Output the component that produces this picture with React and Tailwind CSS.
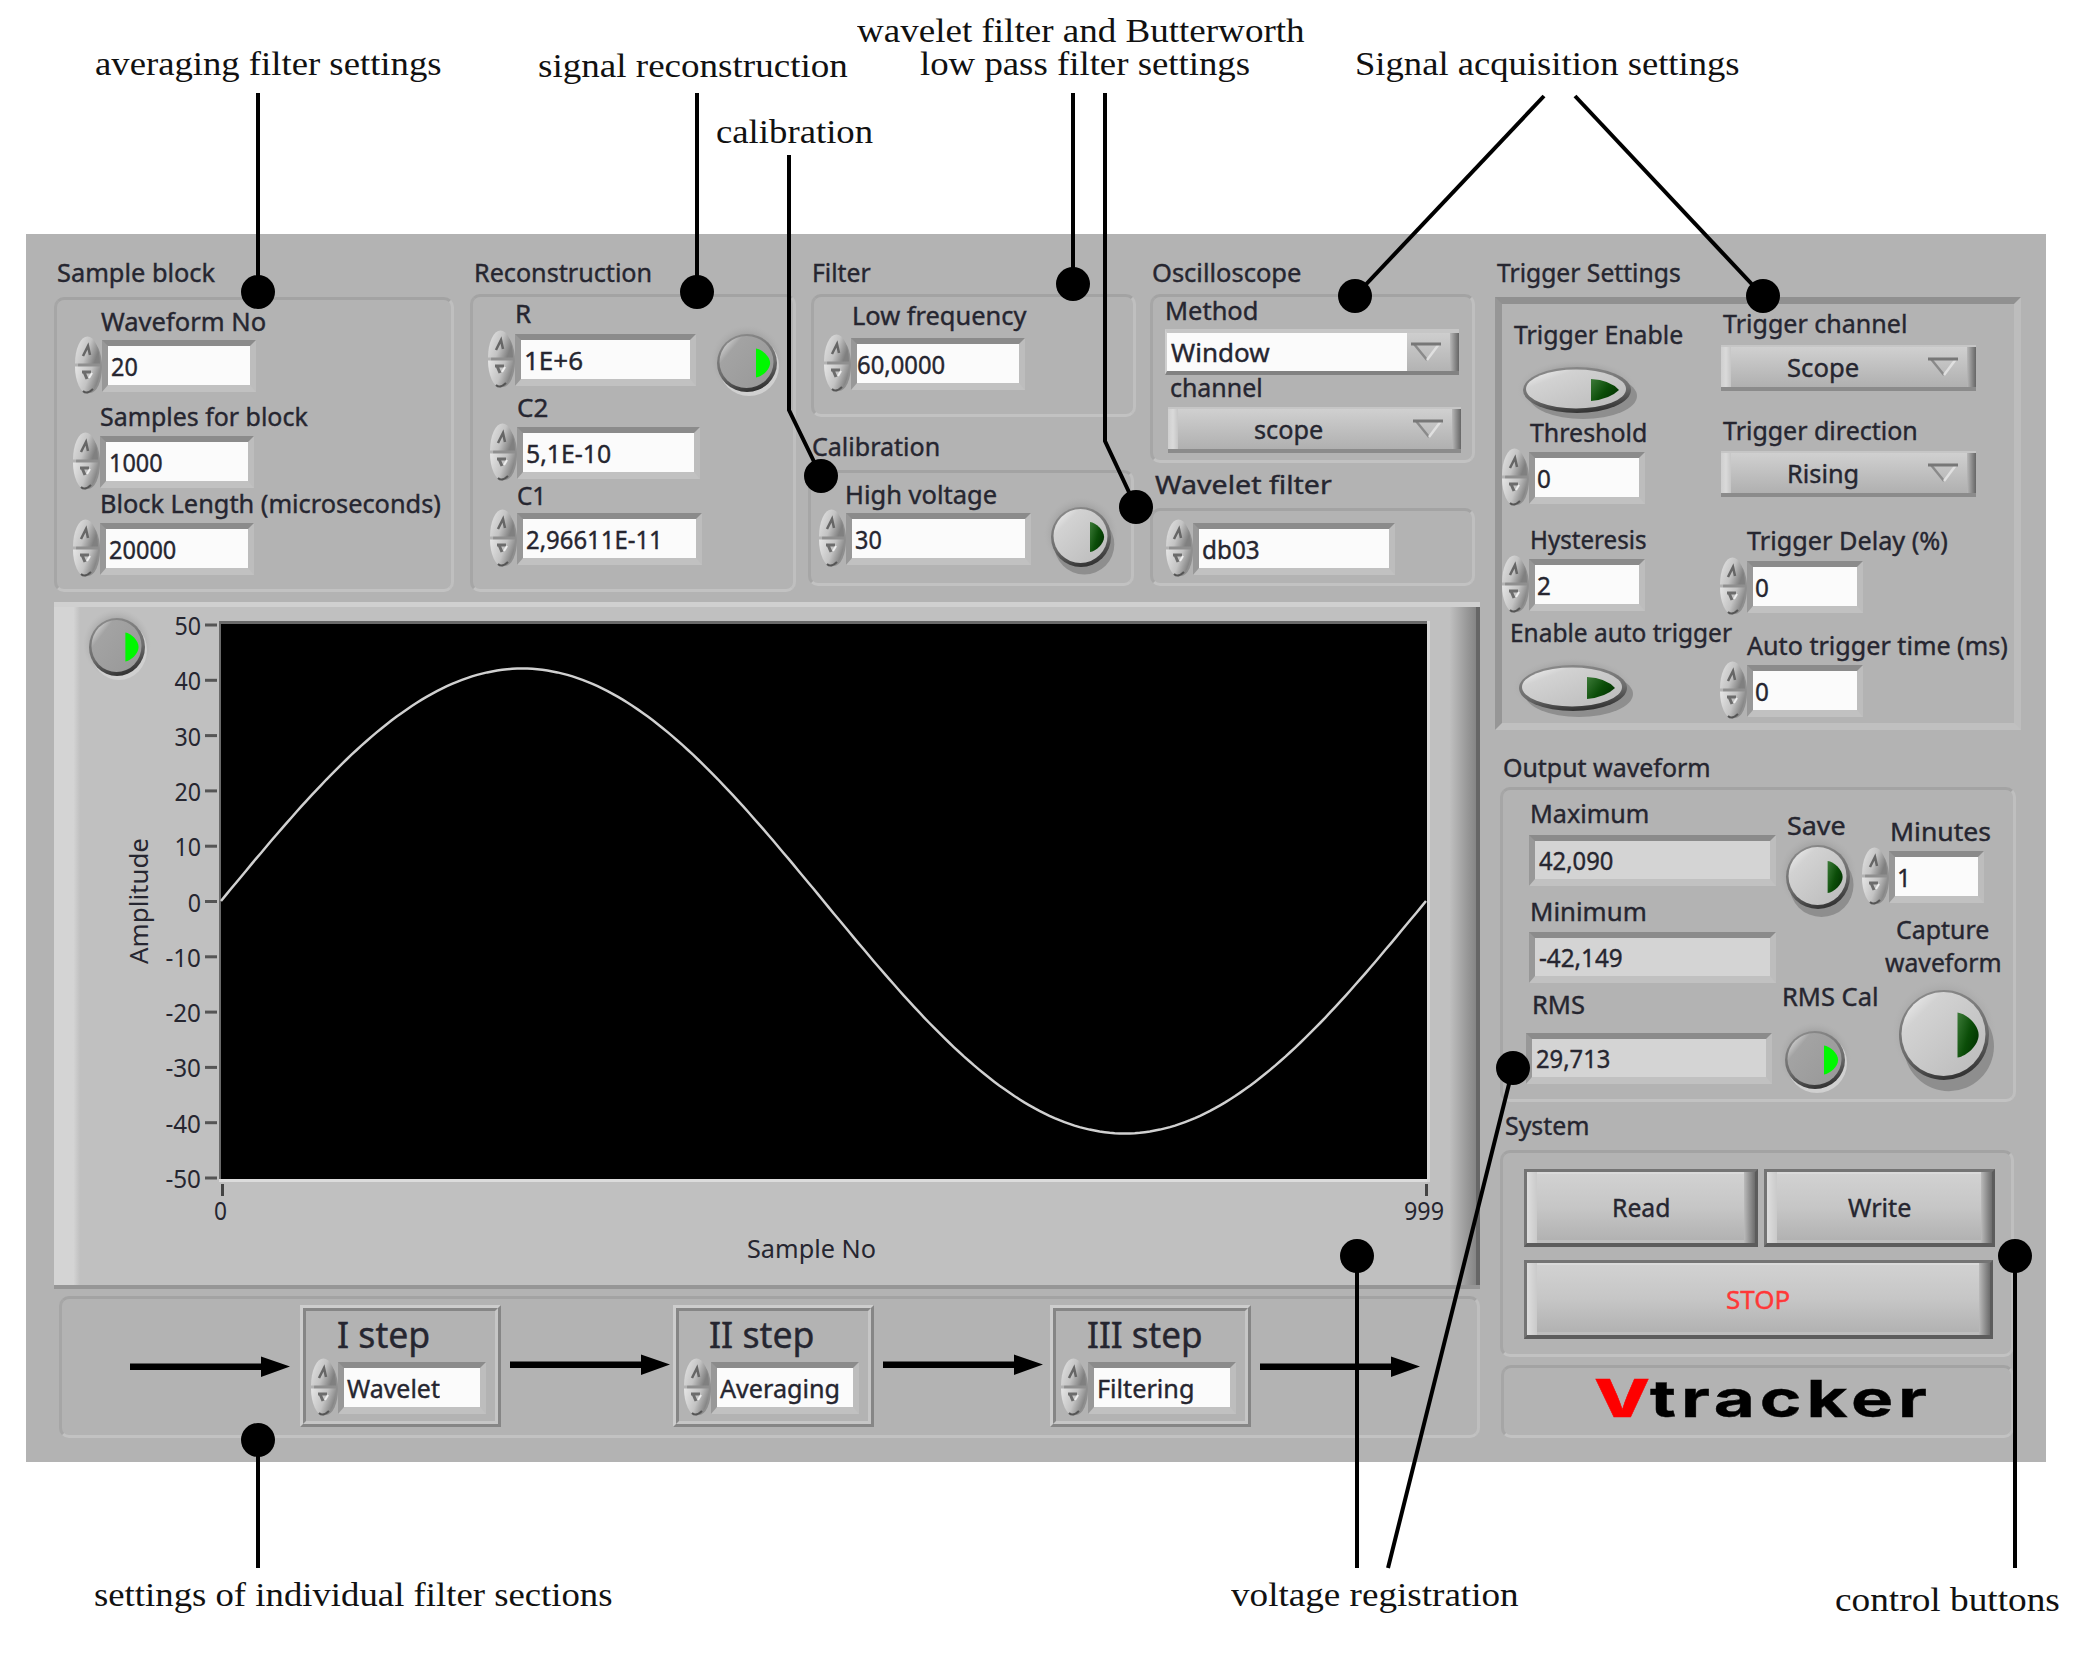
import { useLayoutEffect, useRef, useState } from 'react';

const FRAME = 'border-[3px] rounded-[10px] border-t-[#a3a3a3] border-l-[#a6a6a6] border-r-[#bfbfbf] border-b-[#c2c2c2]';
const SUNKEN = 'border-t-[6px] border-l-[6px] border-r-[6px] border-b-[7px] border-t-[#8b8b8b] border-l-[#989898] border-r-[#bdbdbd] border-b-[#c1c1c1]';

// Stretches one line of text to a given width
function FitText({ w, className = '', children }) {
  const ref = useRef(null);
  const [scale, setScale] = useState(1);

  useLayoutEffect(() => {
    setScale(w / ref.current.offsetWidth);
  }, [w, children]);

  return (
    <div className={`shrink-0 ${className}`} style={{ width: w }}>
      <span ref={ref} className="inline-block origin-left whitespace-nowrap align-top" style={{ transform: `scaleX(${scale})` }}>
        {children}
      </span>
    </div>
  );
}

function Label({ w, className = '', children }) {
  return <FitText w={w} className={`h-[30px] text-[26px] leading-[30px] ${className}`}>{children}</FitText>;
}

function Note({ w, className = '', children }) {
  return (
    <FitText w={w} className={`h-[34px] font-['Liberation_Serif',serif] text-[33px] leading-[33px] text-[#111] [-webkit-text-stroke:0] ${className}`}>
      {children}
    </FitText>
  );
}

function Defs() {
  return (
    <svg className="absolute h-0 w-0">
      <defs>
        <linearGradient id="face" x1="0" y1="0" x2="1" y2="1">
          <stop offset="0" stopColor="#f6f6f6" />
          <stop offset="0.25" stopColor="#d2d2d2" />
          <stop offset="1" stopColor="#bababa" />
        </linearGradient>
        <linearGradient id="facePressed" x1="0" y1="0.1" x2="1" y2="0.9">
          <stop offset="0.05" stopColor="#d6d6d6" />
          <stop offset="0.22" stopColor="#a3a3a3" />
          <stop offset="1" stopColor="#989898" />
        </linearGradient>
        <linearGradient id="rim" x1="0.3" y1="0" x2="0.6" y2="1">
          <stop offset="0" stopColor="#8a8a8a" />
          <stop offset="0.6" stopColor="#6d6d6d" />
          <stop offset="1" stopColor="#303030" />
        </linearGradient>
        <linearGradient id="off" x1="0" y1="0" x2="1" y2="0.6">
          <stop offset="0" stopColor="#3c7a38" />
          <stop offset="0.6" stopColor="#0b4d08" />
          <stop offset="1" stopColor="#033602" />
        </linearGradient>
        <linearGradient id="knob" x1="0" y1="0" x2="1" y2="0.4">
          <stop offset="0" stopColor="#e6e6e6" />
          <stop offset="0.6" stopColor="#c3c3c3" />
          <stop offset="1" stopColor="#808080" />
        </linearGradient>
        <radialGradient id="halo">
          <stop offset="0.75" stopColor="#8c8c8c" stopOpacity="0.8" />
          <stop offset="1" stopColor="#a8a8a8" stopOpacity="0" />
        </radialGradient>
      </defs>
    </svg>
  );
}

function RoundButton({ size, rx, ry, on, className = '' }) {
  const c = size / 2;
  const lx = c + rx * 0.3;
  const tip = lx + rx * 0.47;
  const lh = ry * 0.5;
  return (
    <svg width={size} height={size} className={`shrink-0 overflow-visible ${className}`}>
      {on ? (
        <>
          <ellipse cx={c} cy={c - 3} rx={rx + 6} ry={ry + 6} fill="url(#halo)" opacity="0.45" />
          <ellipse cx={c + 2} cy={c + 3} rx={rx} ry={ry + 1} fill="#d0d0d0" />
        </>
      ) : (
        <>
          <ellipse cx={c} cy={c - 3} rx={rx + 7} ry={ry + 7} fill="url(#halo)" opacity="0.45" />
          <ellipse cx={c + rx * 0.11} cy={c + ry * 0.25} rx={rx} ry={ry} fill="#8e8e8e" />
        </>
      )}
      <ellipse cx={c} cy={c} rx={rx} ry={ry} fill="url(#rim)" />
      <ellipse cx={c - 0.5} cy={c - 1} rx={rx - 3} ry={ry - 3} fill={on ? 'url(#facePressed)' : 'url(#face)'} />
      <path
        d={`M${lx} ${c - lh} C${lx + rx * 0.2} ${c - lh * 0.95} ${tip} ${c - lh * 0.45} ${tip} ${c} C${tip} ${c + lh * 0.45} ${lx + rx * 0.2} ${c + lh * 0.95} ${lx} ${c + lh} Z`}
        fill={on ? '#00f800' : 'url(#off)'}
      />
    </svg>
  );
}

function OvalButton({ className = '' }) {
  return (
    <svg width="130" height="66" className={`shrink-0 overflow-visible ${className}`}>
      <ellipse cx="65" cy="32" rx="60" ry="29" fill="url(#halo)" opacity="0.5" />
      <ellipse cx="71" cy="39" rx="54" ry="23" fill="#8e8e8e" />
      <ellipse cx="65" cy="33" rx="54" ry="23" fill="url(#rim)" />
      <ellipse cx="64" cy="32" rx="50" ry="19.5" fill="url(#face)" />
      <path d="M79 22 Q98 23 107 33 Q98 42 79 44 Z" fill="url(#off)" />
    </svg>
  );
}

function Spinner() {
  return (
    <svg width="25" height="56" className="shrink-0 overflow-visible">
      <ellipse cx="15" cy="30" rx="12" ry="26" fill="#8f8f8f" />
      <path d="M0 26.500 A12.500 27 0 0 1 25 26.500 Z" fill="url(#knob)" />
      <path d="M0 29.500 A12.500 27 0 0 0 25 29.500 Z" fill="url(#knob)" />
      <path d="M8 19 L13 9 L15 18" fill="none" stroke="#666" strokeWidth="2.500" />
      <path d="M7 35 H16 M9 35 L12 42" fill="none" stroke="#6c6c6c" strokeWidth="3" />
      <path d="M14 41 L17 36" fill="none" stroke="#eee" strokeWidth="2" />
      <path d="M8 54 Q12 58 18 52" fill="none" stroke="#555" strokeWidth="2" />
    </svg>
  );
}

// tw is the width of the value text, boxClass the width of the white part
function NumField({ value, tw, boxClass, pad = 'ml-[3px]', className = '' }) {
  return (
    <div className={`flex h-14 shrink-0 ${className}`}>
      <Spinner />
      <div className={`ml-0.5 mt-[3px] box-content h-[39px] shrink-0 ${SUNKEN} bg-[#fbfbfb] ${boxClass}`}>
        <FitText w={tw} className={`h-[39px] text-[26px] leading-[41px] ${pad}`}>{value}</FitText>
      </div>
    </div>
  );
}

function Indicator({ value, tw, className = '' }) {
  return (
    <div className={`h-[51px] shrink-0 bg-[#d4d4d4] pl-1 ${SUNKEN} ${className}`}>
      <FitText w={tw} className="h-[38px] text-[26px] leading-[38px]">{value}</FitText>
    </div>
  );
}

function Triangle() {
  return (
    <svg width="30" height="20" className="shrink-0">
      <path d="M3 2 L16 18" stroke="#8a8a8a" strokeWidth="2.500" />
      <path d="M28 2 L16 18" stroke="#e0e0e0" strokeWidth="2.500" />
      <path d="M0 2 H30" stroke="#777" strokeWidth="3" />
    </svg>
  );
}

function Ring({ value, tw, textClass, className = '' }) {
  return (
    <div className={`flex h-[46px] shrink-0 border-b-[4px] border-b-[#8b8b8b] border-t-2 border-t-[#c6c6c6] bg-linear-to-b from-[#d0d0d0] to-[#b0b0b0] ${className}`}>
      <div className="w-[10px] bg-linear-to-r from-[#cfcfcf] via-[#dadada] to-[#c6c6c6]" />
      <div className="flex flex-1 items-center justify-between pr-[9px]">
        <FitText w={tw} className={`h-[40px] text-[26px] leading-[41px] ${textClass}`}>{value}</FitText>
        <Triangle />
      </div>
      <div className="w-[9px] bg-linear-to-r from-[#b8b8b8] to-[#666]" />
    </div>
  );
}

function PushButton({ text, tw, className = '' }) {
  return (
    <div className={`flex shrink-0 border-[3px] border-b-[4px] border-[#747474] border-b-[#5c5c5c] border-r-[#5c5c5c] bg-linear-to-b from-[#d2d2d2] via-[#c6c6c6] to-[#b0b0b0] ${className}`}>
      <div className="w-[10px] bg-linear-to-r from-[#dedede] to-[#cacaca]" />
      <div className="flex flex-1 items-center justify-center border-b-[3px] border-t-2 border-b-[#bdbdbd] border-t-[#dadada]">
        <FitText w={tw} className="h-[34px] text-[26px] leading-[35px]">{text}</FitText>
      </div>
      <div className="w-[11px] bg-linear-to-r from-[#bbb] to-[#6c6c6c]" />
    </div>
  );
}

const yTicks = [50, 40, 30, 20, 10, 0, -10, -20, -30, -40, -50];

function Graph() {
  const points = [];
  for (let i = 0; i <= 240; i++) {
    const x = 167 + (i / 240) * 1205;
    const y = 299 - 232.5 * Math.sin((i / 240) * 2 * Math.PI);
    points.push(`${x.toFixed(1)},${y.toFixed(1)}`);
  }
  return (
    <div className="flex h-[687px] w-[1426px] shrink-0 border-b-[4px] border-t-[5px] border-b-[#969696] border-t-[#d0d0d0] bg-[#c0c0c0]">
      <div className="w-[26px] bg-linear-to-r from-[#d4d4d4] from-75% to-[#c0c0c0]" />
      <svg width="1370" height="678" viewBox="26 5 1370 678" className="shrink-0 overflow-visible">
        <g transform="translate(28 10)">
          <RoundButton size={70} rx={28} ry={29} on />
        </g>
        <rect x="165" y="19" width="1209" height="561" fill="#6a6a6a" />
        <rect x="165" y="577" width="1209" height="3" fill="#dcdcdc" />
        <rect x="1373" y="19" width="3" height="561" fill="#d6d6d6" />
        <rect x="167" y="22" width="1206" height="555" fill="#000" />
        <polyline points={points.join(' ')} fill="none" stroke="#d0d0d0" strokeWidth="2.500" />
        {yTicks.map((t, i) => {
          const y = 23 + i * 55.3;
          const w = String(Math.abs(t)).length * 13.3 + (t < 0 ? 9 : 0);
          return (
            <g key={t}>
              <rect x="151" y={y - 1.5} width="12" height="3" fill="#555" />
              <text x={147 - w} y={y + 10} fontSize="26" textLength={w} lengthAdjust="spacingAndGlyphs" fill="#262630">{t}</text>
            </g>
          );
        })}
        <rect x="167" y="582" width="3" height="12" fill="#444" />
        <rect x="1371" y="582" width="3" height="12" fill="#444" />
        <text x="160" y="618" fontSize="26" textLength="13" lengthAdjust="spacingAndGlyphs" fill="#262630">0</text>
        <text x="1350" y="618" fontSize="26" textLength="40" lengthAdjust="spacingAndGlyphs" fill="#262630">999</text>
        <text x="693" y="656" fontSize="26" textLength="129" lengthAdjust="spacingAndGlyphs" fill="#262630">Sample No</text>
        <text transform="translate(94 362) rotate(-90)" fontSize="26" textLength="126" lengthAdjust="spacingAndGlyphs" fill="#262630">Amplitude</text>
      </svg>
      <div className="w-[26px] bg-linear-to-r from-[#bfbfbf] to-[#858585]" />
      <div className="w-[4px] bg-[#666]" />
    </div>
  );
}

function Arrow({ className = '' }) {
  return (
    <svg width="160" height="22" className={`shrink-0 ${className}`}>
      <path d="M0 7.500 H131 V0.500 L160 10.500 L131 21 V14 H0 Z" fill="#000" />
    </svg>
  );
}

function Step({ title, titleW, titleClass, value, tw, boxClass, className }) {
  return (
    <div className={`h-[122px] w-[201px] shrink-0 border-[3px] border-b-[#868686] border-l-[#cdcdcd] border-r-[#868686] border-t-[#cdcdcd] ${className}`}>
      <div className="h-full border-[3px] border-b-[#c6c6c6] border-l-[#868686] border-r-[#c6c6c6] border-t-[#868686]">
        <FitText w={titleW} className={`h-[46px] text-[36px] leading-[48px] ${titleClass}`}>{title}</FitText>
        <NumField value={value} tw={tw} boxClass={boxClass} className="ml-[5px] mt-[2px]" />
      </div>
    </div>
  );
}

function LeftPanel() {
  return (
    <div className="flex w-[1426px] shrink-0 flex-col">
      <div className="flex h-[345px] shrink-0">
        {/* Sample block */}
        <div className="w-[416px] shrink-0">
          <Label w={158} className="ml-[3px]">Sample block</Label>
          <div className={`mt-[10px] flex h-[295px] w-[400px] flex-col ${FRAME}`}>
            <Label w={165} className="ml-[44px] mt-[6px]">Waveform No</Label>
            <NumField value="20" tw={27} boxClass="w-[142px]" className="ml-[18px] mt-px" />
            <Label w={208} className="ml-[43px] mt-2">Samples for block</Label>
            <NumField value="1000" tw={54} boxClass="w-[142px]" className="-mb-px ml-[16px] mt-[2px]" />
            <Label w={341} className="ml-[43px]">Block Length (microseconds)</Label>
            <NumField value="20000" tw={67} boxClass="w-[142px]" className="ml-[16px] mt-[2px]" />
          </div>
        </div>

        {/* Reconstruction */}
        <div className="w-[338px] shrink-0">
          <Label w={178} className="ml-[4px]">Reconstruction</Label>
          <div className={`mt-[7px] flex h-[298px] w-[326px] ${FRAME}`}>
            <div className="flex w-[239px] shrink-0 flex-col">
              <Label w={16} className="ml-[42px] mt-px">R</Label>
              <NumField value="1E+6" tw={59} boxClass="w-[169px]" className="ml-[15px] mt-[3px]" />
              <Label w={31} className="ml-[44px] mt-[5px]">C2</Label>
              <NumField value="5,1E-10" tw={85} boxClass="w-[171px]" className="ml-[17px] mt-[2px]" />
              <Label w={29} className="ml-[44px]">C1</Label>
              <NumField value="2,96611E-11" tw={137} boxClass="w-[173px]" className="ml-[17px]" />
            </div>
            <RoundButton size={70} rx={30} ry={29} on className="mt-[31px]" />
          </div>
        </div>

        {/* Filter + calibration */}
        <div className="w-[342px] shrink-0">
          <Label w={59} className="ml-[4px]">Filter</Label>
          <div className={`ml-[3px] mt-[7px] flex h-[123px] w-[325px] flex-col ${FRAME}`}>
            <Label w={174} className="ml-[38px] mt-[3px]">Low frequency</Label>
            <NumField value="60,0000" tw={88} boxClass="w-[162px]" pad="ml-0" className="ml-[10px] mt-[5px]" />
          </div>
          <Label w={128} className="ml-[4px] mt-[14px]">Calibration</Label>
          <div className={`mt-[9px] flex h-[116px] w-[326px] ${FRAME}`}>
            <div className="flex w-[230px] shrink-0 flex-col">
              <Label w={152} className="ml-[34px] mt-[6px]">High voltage</Label>
              <NumField value="30" tw={27} boxClass="w-[173px]" className="ml-[8px] mt-px" />
            </div>
            <RoundButton size={80} rx={30} ry={30} className="mt-[24px]" />
          </div>
        </div>

        {/* Oscilloscope + wavelet */}
        <div className="w-[325px] shrink-0">
          <Label w={149} className="ml-[2px]">Oscilloscope</Label>
          <div className={`mt-[7px] flex h-[169px] w-[325px] flex-col ${FRAME}`}>
            <Label w={93} className="-mt-[2px] ml-[12px]">Method</Label>
            <div className="ml-[12px] mt-[4px] flex h-[46px] w-[294px] shrink-0 items-center border-b-[4px] border-l-[2px] border-t-[4px] border-b-[#828282] border-l-[#cfcfcf] border-t-[#c6c6c6] bg-linear-to-b from-[#cecece] to-[#b3b3b3]">
              <div className="mr-[4px] h-[38px] w-[240px] bg-[#fbfbfb] pl-[4px]">
                <FitText w={99} className="h-[38px] text-[26px] leading-[38px]">Window</FitText>
              </div>
              <Triangle />
              <div className="ml-auto h-full w-[9px] bg-linear-to-r from-[#b8b8b8] to-[#666]" />
            </div>
            <Label w={93} className="-mt-[3px] ml-[17px]">channel</Label>
            <Ring value="scope" tw={69} textClass="ml-[76px]" className="ml-[15px] mt-[5px] w-[293px]" />
          </div>
          <Label w={177} className="ml-[5px] mt-[6px]">Wavelet filter</Label>
          <div className={`mt-[9px] flex h-[78px] w-[325px] flex-col ${FRAME}`}>
            <NumField value="db03" tw={58} boxClass="w-[190px]" className="ml-[13px] mt-[9px]" />
          </div>
        </div>
      </div>

      <Graph />

      {/* Processing order */}
      <div className={`ml-[5px] mt-[7px] flex h-[142px] w-[1421px] ${FRAME}`}>
        <Arrow className="ml-[68px] mt-[57px]" />
        <Step title="I step" titleW={93} titleClass="ml-[31px]" value="Wavelet" tw={93} boxClass="w-[136px]" className="ml-[10px] mt-[6px]" />
        <Arrow className="ml-[9px] mt-[55px]" />
        <Step title="II step" titleW={105} titleClass="ml-[30px]" value="Averaging" tw={120} boxClass="w-[136px]" className="ml-[3px] mt-[6px]" />
        <Arrow className="ml-[9px] mt-[55px]" />
        <Step title="III step" titleW={116} titleClass="ml-[31px]" value="Filtering" tw={97} boxClass="w-[136px]" className="ml-[7px] mt-[6px]" />
        <Arrow className="ml-[9px] mt-[57px]" />
      </div>
    </div>
  );
}

function RightPanel() {
  return (
    <div className="ml-[15px] flex w-[531px] shrink-0 flex-col">
      {/* Trigger settings */}
      <Label w={184} className="ml-[2px]">Trigger Settings</Label>
      <div className="mt-[10px] flex h-[433px] w-[526px] shrink-0 border-[7px] border-b-[#c0c0c0] border-l-[#969696] border-r-[#bdbdbd] border-t-[#909090]">
        <div className="flex w-[214px] shrink-0 flex-col">
          <Label w={169} className="ml-[12px] mt-[15px]">Trigger Enable</Label>
          <OvalButton className="ml-[10px] mt-2" />
          <Label w={117} className="-mt-[6px] ml-[28px]">Threshold</Label>
          <NumField value="0" tw={14} boxClass="w-[104px]" pad="ml-[2px]" className="mt-[2px]" />
          <Label w={117} className="ml-[28px] mt-[19px]">Hysteresis</Label>
          <NumField value="2" tw={14} boxClass="w-[104px]" pad="ml-[2px]" className="mt-[2px]" />
          <Label w={222} className="ml-[8px] mt-[5px]">Enable auto trigger</Label>
          <OvalButton className="ml-[6px] mt-[8px]" />
        </div>
        <div className="flex shrink-0 flex-col">
          <Label w={184} className="ml-[7px] mt-[4px]">Trigger channel</Label>
          <Ring value="Scope" tw={72} textClass="ml-[56px]" className="ml-[5px] mt-[7px] w-[255px]" />
          <Label w={195} className="ml-[7px] mt-[24px]">Trigger direction</Label>
          <Ring value="Rising" tw={72} textClass="ml-[56px]" className="ml-[5px] mt-[6px] w-[255px]" />
          <Label w={201} className="ml-[31px] mt-[28px]">Trigger Delay (%)</Label>
          <NumField value="0" tw={14} boxClass="w-[104px]" pad="ml-[2px]" className="ml-[4px] mt-[3px]" />
          <Label w={261} className="ml-[31px] mt-[16px]">Auto trigger time (ms)</Label>
          <NumField value="0" tw={14} boxClass="w-[104px]" pad="ml-[2px]" className="ml-[4px] mt-[2px]" />
        </div>
      </div>

      {/* Output waveform */}
      <Label w={208} className="ml-[8px] mt-[22px]">Output waveform</Label>
      <div className={`ml-[5px] mt-[5px] flex h-[315px] w-[516px] shrink-0 ${FRAME}`}>
        <div className="flex w-[276px] shrink-0 flex-col">
          <Label w={119} className="ml-[27px] mt-[8px]">Maximum</Label>
          <Indicator value="42,090" tw={74} className="ml-[26px] mt-[7px] w-[247px]" />
          <Label w={117} className="ml-[27px] mt-[10px]">Minimum</Label>
          <Indicator value="-42,149" tw={84} className="ml-[26px] mt-[6px] w-[247px]" />
          <Label w={53} className="ml-[29px] mt-[6px]">RMS</Label>
          <Indicator value="29,713" tw={74} className="ml-[23px] mt-[14px] w-[246px]" />
        </div>
        <div className="flex w-[83px] shrink-0 flex-col">
          <Label w={59} className="ml-[8px] mt-[20px]">Save</Label>
          <RoundButton size={84} rx={32} ry={32} className="-ml-[3px] -mt-[5px]" />
          <Label w={97} className="ml-[3px] mt-[62px]">RMS Cal</Label>
          <RoundButton size={70} rx={30} ry={29} on className="ml-px mt-[14px]" />
        </div>
        <div className="flex shrink-0 flex-col">
          <Label w={101} className="ml-[28px] mt-[26px]">Minutes</Label>
          <NumField value="1" tw={14} boxClass="w-[83px]" pad="ml-[2px]" className="mt-[2px]" />
          <Label w={93} className="ml-[34px] mt-[10px]">Capture</Label>
          <Label w={117} className="ml-[23px] mt-[3px]">waveform</Label>
          <RoundButton size={126} rx={45} ry={45} className="-mt-[5px] ml-[19px]" />
        </div>
      </div>

      {/* System */}
      <Label w={84} className="ml-[10px] mt-[8px]">System</Label>
      <div className={`ml-[5px] mt-[10px] flex h-[207px] w-[514px] shrink-0 flex-col pl-[21px] ${FRAME}`}>
        <div className="mt-[16px] flex gap-[6px]">
          <PushButton text="Read" tw={58} className="h-[78px] w-[234px]" />
          <PushButton text="Write" tw={63} className="h-[78px] w-[231px]" />
        </div>
        <PushButton text="STOP" tw={64} className="mt-[13px] h-[79px] w-[469px] text-[#ff3838]" />
      </div>

      <div className={`ml-[6px] mt-[8px] flex h-[73px] w-[513px] shrink-0 pl-[90px] pt-px font-['Inter',sans-serif] ${FRAME}`}>
        <FitText w={56} className="text-[52px] font-extrabold leading-[60px] text-[#fe0000]">V</FitText>
        <FitText w={282} className="text-[51px] font-bold leading-[60px] tracking-[0.07em] text-black">tracker</FitText>
      </div>
    </div>
  );
}

const leaders = [
  '258,93 258,292',
  '697,93 697,292',
  '789,155 789,410 821,476',
  '1073,93 1073,284',
  '1105,93 1105,441 1136,507',
  '1544,96 1355,296',
  '1575,96 1763,296',
  '258,1568 258,1440',
  '1357,1568 1357,1256',
  '1388,1568 1513,1068',
  '2015,1568 2015,1256',
];

// Each leader line ends in a dot
function Leaders() {
  return (
    <svg width="2089" height="1668" className="pointer-events-none absolute left-0 top-0">
      {leaders.map((points) => {
        const [cx, cy] = points.split(' ').at(-1).split(',');
        return (
          <g key={points}>
            <polyline points={points} fill="none" stroke="#000" strokeWidth="4" />
            <circle cx={cx} cy={cy} r="17" />
          </g>
        );
      })}
    </svg>
  );
}

export default function App() {
  return (
    <div className="relative h-[1668px] w-[2089px] overflow-hidden bg-white font-['Noto_Sans','Open_Sans',sans-serif] text-[#262630] [-webkit-text-stroke:0.4px]">
      <Defs />
      <header className="flex h-[234px] items-start">
        <Note w={347} className="ml-[95px] mt-[48px]">averaging filter settings</Note>
        <div className="ml-[96px] mt-[50px] w-[310px] shrink-0">
          <Note w={310}>signal reconstruction</Note>
          <Note w={157} className="ml-[178px] mt-[32px]">calibration</Note>
        </div>
        <div className="ml-[9px] mt-[15px] w-[448px] shrink-0">
          <Note w={448}>wavelet filter and Butterworth</Note>
          <Note w={330} className="-mt-px ml-[63px]">low pass filter settings</Note>
        </div>
        <Note w={384} className="ml-[50px] mt-[48px]">Signal acquisition settings</Note>
      </header>

      <main className="ml-[26px] flex h-[1228px] w-[2020px] bg-[#b3b3b3] pl-[28px] pt-[23px]">
        <LeftPanel />
        <RightPanel />
      </main>

      <footer className="flex items-start">
        <Note w={519} className="ml-[94px] mt-[117px]">settings of individual filter sections</Note>
        <Note w={288} className="ml-[618px] mt-[117px]">voltage registration</Note>
        <Note w={225} className="ml-[316px] mt-[122px]">control buttons</Note>
      </footer>

      <Leaders />
    </div>
  );
}
